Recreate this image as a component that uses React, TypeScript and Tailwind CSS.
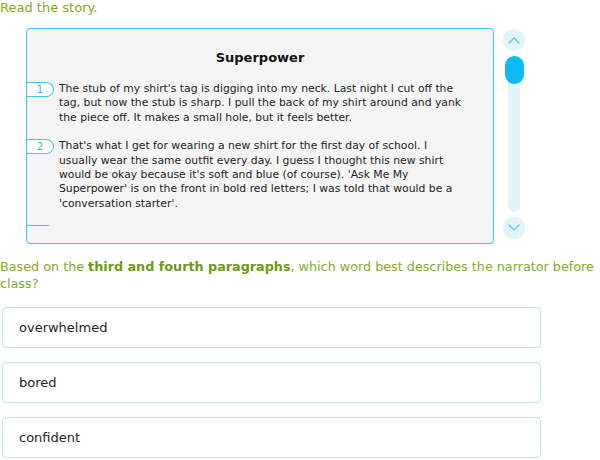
import React from 'react';

// story text, one entry per rendered line so the wrapping stays fixed
const paragraphs = [
  [
    "The stub of my shirt's tag is digging into my neck. Last night I cut off the",
    'tag, but now the stub is sharp. I pull the back of my shirt around and yank',
    'the piece off. It makes a small hole, but it feels better.',
  ],
  [
    "That's what I get for wearing a new shirt for the first day of school. I",
    'usually wear the same outfit every day. I guess I thought this new shirt',
    "would be okay because it's soft and blue (of course). 'Ask Me My",
    "Superpower' is on the front in bold red letters; I was told that would be a",
    "'conversation starter'.",
  ],
  [
    'When I get to class, everyone is already sitting down. The teacher points',
    'me to an empty desk in the back row.',
  ],
];

const choices = ['overwhelmed', 'bored', 'confident'];

function Chevron({ up }: { up?: boolean }) {
  return (
    <svg width="12" height="8" viewBox="0 0 12 8" fill="none">
      <path
        d={up ? 'M1 7 L6 2 L11 7' : 'M1 1 L6 6 L11 1'}
        stroke="#5ec8f0"
        strokeWidth="1.4"
        strokeLinecap="round"
        strokeLinejoin="round"
      />
    </svg>
  );
}

export default function App() {
  return (
    <div className="w-[600px] h-[460px] overflow-hidden bg-white font-['DejaVu_Sans',Verdana,sans-serif]">
      <div className="text-[13px] leading-[16px] text-[#80ad2c]">Read the story.</div>

      {/* story panel + scrollbar */}
      <div className="flex mt-[12px] ml-[26px]">
        <div className="w-[468px] h-[216px] pb-[17px] rounded-[4px] border border-[#45c3f0] bg-[#f5f5f5]">
          <div className="h-full overflow-hidden">
            <h3 className="text-center text-[13px] font-bold text-[#111] pt-[21px] leading-[16px]">Superpower</h3>
            <div className="mt-[16px] flex flex-col gap-[14px]">
              {paragraphs.map((lines, i) => (
                <div key={i} className="flex items-start">
                  <div className="w-[27px] h-[15px] shrink-0 rounded-r-full border border-l-0 border-[#45c3f0] bg-white text-center text-[10px] leading-[13px] text-[#2bb5ec]">
                    {i + 1}
                  </div>
                  <p className="ml-[5px] text-[10.8px] leading-[14.4px] text-[#222] whitespace-nowrap">
                    {lines.map((l, j) => (
                      <span key={j} className="block">{l}</span>
                    ))}
                  </p>
                </div>
              ))}
            </div>
          </div>
        </div>

        <div className="ml-[9px] w-[22px] flex flex-col items-center">
          <div className="w-[22px] h-[22px] mt-[1px] rounded-full bg-[#e3f3fa] flex items-center justify-center">
            <Chevron up />
          </div>
          <div className="relative w-[12px] h-[154px] mt-[7px] rounded-full bg-[#e3f3fa]">
            <div className="absolute -top-[2px] -left-[3.5px] w-[19px] h-[28px] rounded-full bg-[#0cbbf5]" />
          </div>
          <div className="w-[22px] h-[22px] mt-[5px] rounded-full bg-[#e3f3fa] flex items-center justify-center">
            <Chevron />
          </div>
        </div>
      </div>

      <p className="mt-[14px] w-[620px] text-[12.75px] leading-[17px] text-[#80ad2c]">
        Based on the <b className="text-[#6b9a18]">third and fourth paragraphs</b>, which word best describes the narrator before class?
      </p>

      <div className="mt-[15px] ml-[2px] w-[539px] flex flex-col gap-[14px]">
        {choices.map((c) => (
          <div key={c} className="h-[41px] rounded-[4px] border border-[#b5e6fb] flex items-center pl-[16px] text-[13px] text-[#222]">
            {c}
          </div>
        ))}
      </div>
    </div>
  );
}
